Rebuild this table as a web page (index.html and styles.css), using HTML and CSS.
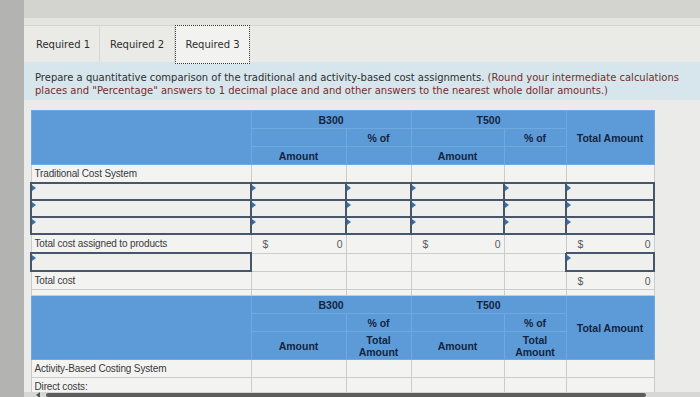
FILE: index.html
```html
<!DOCTYPE html>
<html>
<head>
<meta charset="utf-8">
<link rel="stylesheet" href="styles.css">
</head>
<body>
<div class="page">
  <div class="edge"></div>
  <div class="main">
    <div class="topbar"></div>
    <div class="tabs">
      <div class="tab">Required 1</div>
      <div class="tab">Required 2</div>
      <div class="tab active">Required 3</div>
    </div>
    <div class="instructions">
      <p>Prepare a quantitative comparison of the traditional and activity-based cost assignments. <span class="note">(Round your intermediate calculations places and "Percentage" answers to 1 decimal place and and other answers to the nearest whole dollar amounts.)</span></p>
    </div>
    <div class="table-wrap">
      <table class="grid">
        <colgroup>
          <col class="c-label"><col class="c-amt1"><col class="c-pct1"><col class="c-amt2"><col class="c-pct2"><col class="c-total">
        </colgroup>
        <tr class="hd">
          <th rowspan="3"></th>
          <th colspan="2" class="prod">B300</th>
          <th colspan="2" class="prod">T500</th>
          <th rowspan="3" class="tot">Total Amount</th>
        </tr>
        <tr class="hd"><th></th><th>% of</th><th></th><th>% of</th></tr>
        <tr class="hd"><th>Amount</th><th></th><th>Amount</th><th></th></tr>

        <tr class="r"><td class="lbl">Traditional Cost System</td><td></td><td></td><td></td><td></td><td></td></tr>
        <tr class="r"><td class="in"></td><td class="in"></td><td class="in"></td><td class="in"></td><td class="in"></td><td class="in"></td></tr>
        <tr class="r"><td class="in"></td><td class="in"></td><td class="in"></td><td class="in"></td><td class="in"></td><td class="in"></td></tr>
        <tr class="r"><td class="in"></td><td class="in"></td><td class="in"></td><td class="in"></td><td class="in"></td><td class="in"></td></tr>
        <tr class="r"><td class="lbl">Total cost assigned to products</td><td><div class="money"><span>$</span><span>0</span></div></td><td></td><td><div class="money"><span>$</span><span>0</span></div></td><td></td><td><div class="money"><span>$</span><span>0</span></div></td></tr>
        <tr class="r"><td class="in"></td><td></td><td></td><td></td><td></td><td class="in"></td></tr>
        <tr class="r"><td class="lbl">Total cost</td><td></td><td></td><td></td><td></td><td><div class="money"><span>$</span><span>0</span></div></td></tr>
        <tr class="spacer"><td></td><td></td><td></td><td></td><td></td><td></td></tr>

        <tr class="hd">
          <th rowspan="3"></th>
          <th colspan="2" class="prod">B300</th>
          <th colspan="2" class="prod">T500</th>
          <th rowspan="3" class="tot">Total Amount</th>
        </tr>
        <tr class="hd"><th></th><th>% of</th><th></th><th>% of</th></tr>
        <tr class="hd tall"><th>Amount</th><th>Total<br>Amount</th><th>Amount</th><th>Total<br>Amount</th></tr>

        <tr class="r"><td class="lbl">Activity-Based Costing System</td><td></td><td></td><td></td><td></td><td></td></tr>
        <tr class="r"><td class="lbl">Direct costs:</td><td></td><td></td><td></td><td></td><td></td></tr>
      </table>
    </div>
    <div class="scrollbar"><span class="arrow"></span><span class="thumb"></span></div>
  </div>
</div>
</body>
</html>
```

FILE: styles.css
```css
html, body {
  margin: 0;
  padding: 0;
}
body {
  width: 700px;
  height: 397px;
  overflow: hidden;
  background: #e9e9e7;
}
.page {
  display: flex;
  width: 700px;
  height: 397px;
}
.edge {
  width: 24px;
  flex: none;
  background: #b3b3b1;
}
.main {
  flex: 1;
  display: flex;
  flex-direction: column;
  background: #ebebe9;
  min-width: 0;
}
.topbar {
  height: 18px;
  flex: none;
  background: #d3d3cf;
  border-bottom: 7px solid #e4e4e1;
}
.tabs {
  display: flex;
  height: 37px;
  flex: none;
  padding-left: 3px;
  background: #eaeae7;
  border-top: 1px solid #d4d4d1;
  box-sizing: border-box;
  font-family: "DejaVu Sans", Verdana, sans-serif;
  font-size: 10px;
  color: #2e2e2e;
}
.tab {
  width: 73px;
  display: flex;
  align-items: center;
  justify-content: center;
  border-right: 1px solid #d6d6d3;
  box-sizing: border-box;
}
.tab + .tab {
  width: 75px;
}
.tab.active {
  background: #f2f2f0;
  border: 1px dotted #3a3a3a;
  margin-top: -1px;
  height: 39px;
  position: relative;
  z-index: 1;
}
.instructions {
  height: 38px;
  flex: none;
  background: #d6e6ec;
  padding: 9px 0 0 11px;
  box-sizing: border-box;
  font-family: "DejaVu Sans", Verdana, sans-serif;
  font-size: 10px;
  line-height: 13px;
  color: #2f2f2f;
  overflow: hidden;
}
.instructions p {
  margin: 0;
  width: 664px;
}
.note {
  color: #7b2c2c;
}
.table-wrap {
  margin: 10px 0 0 6px;
  height: 282px;
  overflow: hidden;
  flex: none;
}
.grid {
  border-collapse: collapse;
  table-layout: fixed;
  width: 623px;
  font-family: "Liberation Sans", Arial, sans-serif;
}
.c-label { width: 220px; }
.c-amt1 { width: 95px; }
.c-pct1 { width: 65px; }
.c-amt2 { width: 93px; }
.c-pct2 { width: 62px; }
.c-total { width: 88px; }

.hd th {
  background: #5c9bd8;
  color: #15243d;
  font-size: 10.5px;
  font-weight: bold;
  height: 17px;
  padding: 0;
  line-height: 12px;
  border: 1px solid #6fa9df;
  text-align: center;
}
.hd.tall th {
  height: 27px;
}
.r td {
  height: 17px;
  padding: 0;
  background: #f3f3f2;
  border: 1px solid #cbcbc9;
  font-size: 10px;
  line-height: 12px;
  color: #3a3a3a;
  position: relative;
}
.r td.lbl {
  padding-left: 3px;
  letter-spacing: -0.15px;
  white-space: nowrap;
}
.r td.in {
  border: 2px solid #46576b;
  background: #efefee;
  height: 15px;
}
.r td.in::before {
  content: "";
  position: absolute;
  left: 0;
  top: 1px;
  border-left: 4px solid #3b6fa8;
  border-top: 3px solid transparent;
  border-bottom: 3px solid transparent;
}
.money {
  display: flex;
  justify-content: space-between;
  padding: 0 3px 0 11px;
  color: #5a5a5a;
  font-size: 10.5px;
}
.spacer td {
  height: 5px;
  padding: 0;
  background: #f3f3f2;
  border: 1px solid #cbcbc9;
}
.scrollbar {
  height: 5px;
  flex: none;
  display: flex;
  align-items: center;
  gap: 6px;
  padding-left: 12px;
  background: #d7d7d5;
}
.arrow {
  width: 0;
  height: 0;
  border-right: 4px solid #555;
  border-top: 3px solid transparent;
  border-bottom: 3px solid transparent;
}
.thumb {
  width: 600px;
  height: 4px;
  background: #5d5d5d;
  border-radius: 2px;
}
```
